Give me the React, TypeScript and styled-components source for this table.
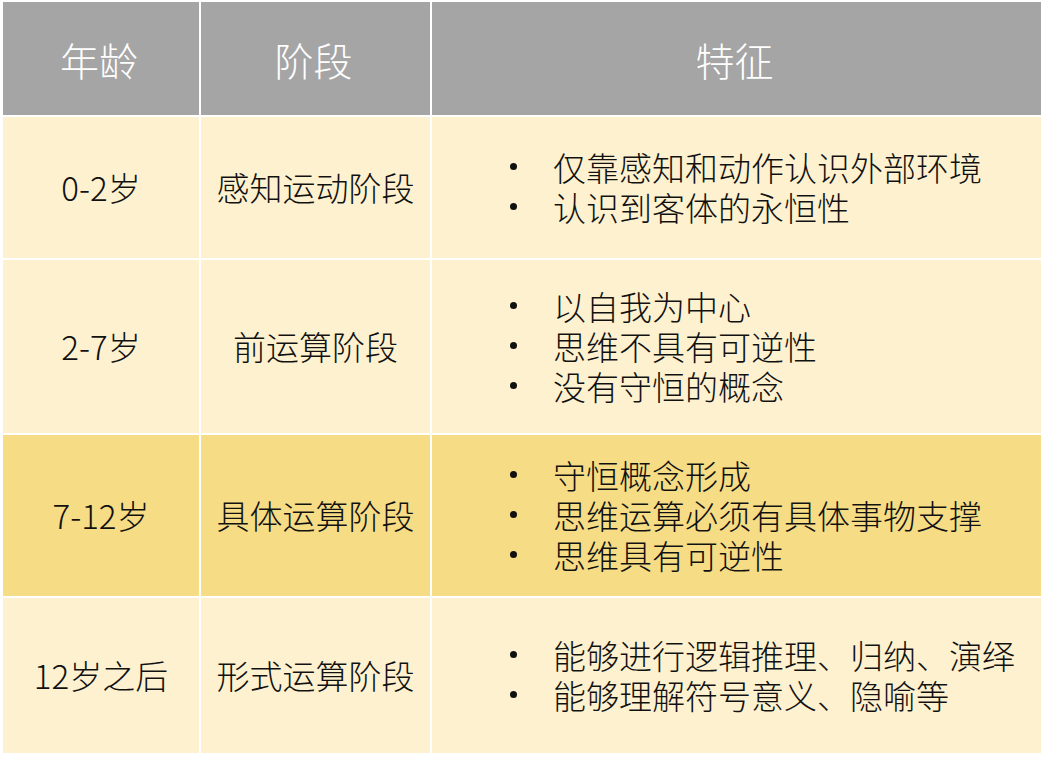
import { FC, Fragment } from "react";
import styled, { createGlobalStyle } from "styled-components";

const GlobalStyle = createGlobalStyle`
  body {
    margin: 0;
    background: #ffffff;
    font-family: "Noto Sans CJK SC", "Liberation Sans", sans-serif;
  }
`;

type Row = { age: string; stage: string; traits: string[]; strong?: boolean; height: number };

const rows: Row[] = [
  { age: "0-2岁", stage: "感知运动阶段", traits: ["仅靠感知和动作认识外部环境", "认识到客体的永恒性"], height: 141 },
  { age: "2-7岁", stage: "前运算阶段", traits: ["以自我为中心", "思维不具有可逆性", "没有守恒的概念"], height: 173 },
  {
    age: "7-12岁",
    stage: "具体运算阶段",
    traits: ["守恒概念形成", "思维运算必须有具体事物支撑", "思维具有可逆性"],
    strong: true,
    height: 161,
  },
  { age: "12岁之后", stage: "形式运算阶段", traits: ["能够进行逻辑推理、归纳、演绎", "能够理解符号意义、隐喻等"], height: 155 },
];

const App: FC = () => (
  <>
    <GlobalStyle />
    <Page>
      <Table style={{ gridTemplateRows: `113px ${rows.map((r) => r.height + "px").join(" ")}` }}>
        <Head>年龄</Head>
        <Head>阶段</Head>
        <Head>特征</Head>
        {rows.map((row) => (
          <Fragment key={row.age}>
            <Cell $strong={row.strong}>{row.age}</Cell>
            <Cell $strong={row.strong}>{row.stage}</Cell>
            <TraitCell $strong={row.strong}>
              <List>
                {row.traits.map((t) => (
                  <Item key={t}>
                    <Dot />
                    {t}
                  </Item>
                ))}
              </List>
            </TraitCell>
          </Fragment>
        ))}
      </Table>
    </Page>
  </>
);

export default App;

const Page = styled.div`
  padding: 2px 0 0 3px;
`;

const Table = styled.div`
  display: grid;
  grid-template-columns: 196px 229px 609px;
  gap: 2px;
  width: 1038px;
  background: #ffffff;
`;

const Head = styled.div`
  display: flex;
  align-items: center;
  justify-content: center;
  background: #a5a5a5;
  color: #ffffff;
  font-size: 39px;
  font-weight: 300;
  padding-right: 4px;
`;

const Cell = styled.div<{ $strong?: boolean }>`
  display: flex;
  align-items: center;
  justify-content: center;
  background: ${(p) => (p.$strong ? "#f7dc86" : "#fef1cf")};
  color: #111111;
  font-size: 33px;
  font-weight: 300;
  padding-bottom: 2px;
`;

const TraitCell = styled(Cell)`
  justify-content: flex-start;
  padding-left: 78px;
`;

const List = styled.div`
  display: flex;
  flex-direction: column;
`;

const Item = styled.div`
  display: flex;
  align-items: center;
  height: 40px;
  line-height: 40px;
  white-space: nowrap;
`;

const Dot = styled.span`
  width: 7px;
  height: 7px;
  border-radius: 50%;
  background: #111111;
  margin-right: 36px;
  flex: none;
`;
